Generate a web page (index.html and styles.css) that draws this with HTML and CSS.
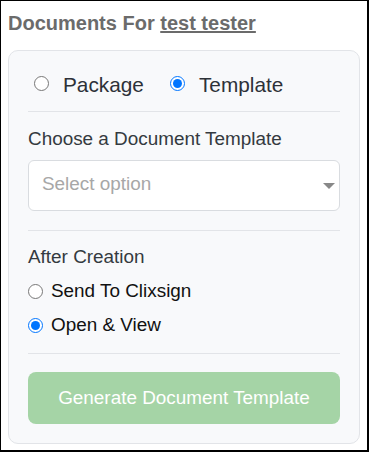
FILE: index.html
```html
<!DOCTYPE html>
<html lang="en">
<head>
    <meta charset="UTF-8">
    <meta name="viewport" content="width=device-width, initial-scale=1.0">
    <title>Documents</title>
    <link rel="stylesheet" href="styles.css">
</head>
<body>
    <div class="page">
        <h3 class="title">Documents For <a href="#">test tester</a></h3>

        <div class="doc-card">
            <div class="type-row">
                <label class="type-option">
                    <input type="radio" name="doc-type" value="package">
                    <span>Package</span>
                </label>
                <label class="type-option">
                    <input type="radio" name="doc-type" value="template" checked>
                    <span>Template</span>
                </label>
            </div>

            <div class="divider"></div>

            <div class="field-label">Choose a Document Template</div>
            <div class="select-box">
                <span class="placeholder">Select option</span>
                <span class="caret"></span>
            </div>

            <div class="divider divider-wide"></div>

            <div class="field-label">After Creation</div>
            <label class="after-option">
                <input type="radio" name="after" value="clixsign">
                <span>Send To Clixsign</span>
            </label>
            <label class="after-option">
                <input type="radio" name="after" value="view" checked>
                <span>Open &amp; View</span>
            </label>

            <div class="divider divider-last"></div>

            <button class="generate-btn" disabled>Generate Document Template</button>
        </div>
    </div>
</body>
</html>
```

FILE: styles.css
```css
body {
    font-family: "Liberation Sans", Arial, sans-serif;
    margin: 0;
    padding: 0;
    background-color: white;
}

.page {
    box-sizing: border-box;
    height: 452px;
    border: 1px solid black;
    border-right-width: 2px;
    border-bottom-width: 2px;
    padding: 0 7px;
}

.title {
    margin: 10px 0 15px 0;
    font-size: 20px;
    line-height: 24px;
    font-weight: bold;
    color: #6b6b6b;
}

.title a {
    color: #6b6b6b;
    text-decoration: underline;
}

.doc-card {
    background-color: #f8f9fb;
    border: 1px solid #e2e4e8;
    border-radius: 10px;
    padding: 22px 19px 19px 19px;
}

.type-row {
    display: flex;
    gap: 26px;
    padding-left: 6px;
    font-size: 20.8px;
    line-height: 24px;
    color: #2d3138;
}

.type-option {
    display: flex;
    align-items: center;
    gap: 14px;
}

.type-option input,
.after-option input {
    width: 15px;
    height: 15px;
    margin: 0 0 4px 0;
}

.divider {
    height: 1px;
    background-color: #e2e4e8;
    margin: 14px 0 16px 0;
}

.divider-wide {
    margin: 19px 0 15px 0;
}

.divider-last {
    margin: 17px 0 18px 0;
}

.field-label {
    font-size: 18.9px;
    line-height: 22px;
    color: #343a40;
}

.select-box {
    box-sizing: border-box;
    height: 51px;
    margin-top: 10px;
    display: flex;
    align-items: center;
    justify-content: space-between;
    padding: 0 4px 3px 13px;
    background-color: white;
    border: 1px solid #d9dce0;
    border-radius: 6px;
}

.placeholder {
    font-size: 18.9px;
    line-height: 22px;
    color: #a7a7a7;
}

.caret {
    width: 0;
    height: 0;
    margin-top: 3px;
    border-left: 6px solid transparent;
    border-right: 6px solid transparent;
    border-top: 6px solid #888;
}

.after-option {
    display: flex;
    align-items: center;
    gap: 8px;
    margin-top: 12px;
    font-size: 18.9px;
    line-height: 22px;
    color: #111;
}

.after-option input {
    margin: 0;
}

.generate-btn {
    display: block;
    width: 100%;
    height: 52px;
    border: none;
    border-radius: 8px;
    background-color: #a5d4a6;
    color: white;
    font-family: "Liberation Sans", Arial, sans-serif;
    font-size: 18.9px;
}
```
